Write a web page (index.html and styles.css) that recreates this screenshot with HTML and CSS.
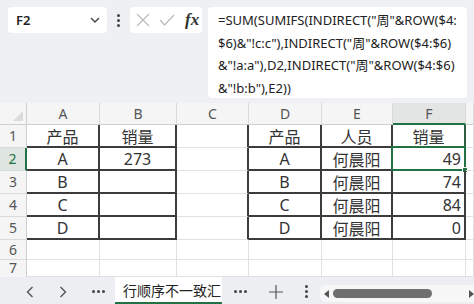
FILE: index.html
```html
<!DOCTYPE html>
<html lang="zh-CN">
<head>
  <meta charset="UTF-8" />
  <title>行顺序不一致汇总</title>
  <link rel="stylesheet" href="styles.css">
</head>
<body>
  <div class="formula-bar">
    <div class="name-box">
      <span>F2</span>
      <svg width="10" height="6" viewBox="0 0 10 6"><path d="M1 1l4 4 4-4" fill="none" stroke="#444" stroke-width="1.4"/></svg>
    </div>
    <div class="more-dots"><i></i><i></i><i></i></div>
    <div class="fx-box">
      <svg width="14" height="14" viewBox="0 0 14 14"><path d="M1 1l12 12M13 1L1 13" stroke="#b9bcc0" stroke-width="1.2"/></svg>
      <svg width="16" height="12" viewBox="0 0 16 12"><path d="M1 6l4.5 5L15 1" fill="none" stroke="#b9bcc0" stroke-width="1.2"/></svg>
      <span class="fx">fx</span>
    </div>
    <div class="formula">=SUM(SUMIFS(INDIRECT("周"&amp;ROW($4:<br>$6)&amp;"!c:c"),INDIRECT("周"&amp;ROW($4:$6)<br>&amp;"!a:a"),D2,INDIRECT("周"&amp;ROW($4:$6)<br>&amp;"!b:b"),E2))</div>
  </div>

  <div class="sheet">
    <!-- column headers -->
    <div class="cell corner"></div>
    <div class="cell hdr">A</div>
    <div class="cell hdr">B</div>
    <div class="cell hdr">C</div>
    <div class="cell hdr">D</div>
    <div class="cell hdr">E</div>
    <div class="cell hdr active-col">F</div>
    <div class="cell hdr"></div>

    <!-- row 1 -->
    <div class="cell rh">1</div>
    <div class="cell tb">产品</div>
    <div class="cell tb">销量</div>
    <div class="cell edge"></div>
    <div class="cell tb">产品</div>
    <div class="cell tb">人员</div>
    <div class="cell tb col-f">销量</div>
    <div class="cell"></div>

    <!-- row 2 -->
    <div class="cell rh active-row">2</div>
    <div class="cell tb">A</div>
    <div class="cell tb">273</div>
    <div class="cell edge"></div>
    <div class="cell tb">A</div>
    <div class="cell tb">何晨阳</div>
    <div class="cell tb num selected">49<span class="sel"><b></b></span></div>
    <div class="cell"></div>

    <!-- row 3 -->
    <div class="cell rh">3</div>
    <div class="cell tb">B</div>
    <div class="cell tb"></div>
    <div class="cell edge"></div>
    <div class="cell tb">B</div>
    <div class="cell tb">何晨阳</div>
    <div class="cell tb num">74</div>
    <div class="cell"></div>

    <!-- row 4 -->
    <div class="cell rh">4</div>
    <div class="cell tb">C</div>
    <div class="cell tb"></div>
    <div class="cell edge"></div>
    <div class="cell tb">C</div>
    <div class="cell tb">何晨阳</div>
    <div class="cell tb num">84</div>
    <div class="cell"></div>

    <!-- row 5 -->
    <div class="cell rh">5</div>
    <div class="cell tb">D</div>
    <div class="cell tb"></div>
    <div class="cell edge"></div>
    <div class="cell tb">D</div>
    <div class="cell tb">何晨阳</div>
    <div class="cell tb num">0</div>
    <div class="cell"></div>

    <!-- row 6 -->
    <div class="cell rh">6</div>
    <div class="cell"></div>
    <div class="cell"></div>
    <div class="cell"></div>
    <div class="cell"></div>
    <div class="cell"></div>
    <div class="cell"></div>
    <div class="cell"></div>

    <!-- row 7 (cut by the tab bar) -->
    <div class="cell rh last">7</div>
    <div class="cell"></div>
    <div class="cell"></div>
    <div class="cell"></div>
    <div class="cell"></div>
    <div class="cell"></div>
    <div class="cell"></div>
    <div class="cell"></div>
  </div>

  <div class="tabbar">
    <div class="tab-nav">
      <svg width="8" height="12" viewBox="0 0 8 12"><path d="M6.5 1L1.5 6l5 5" fill="none" stroke="#555" stroke-width="1.4"/></svg>
      <svg width="8" height="12" viewBox="0 0 8 12"><path d="M1.5 1l5 5-5 5" fill="none" stroke="#555" stroke-width="1.4"/></svg>
      <span class="hdots"><i></i><i></i><i></i></span>
    </div>
    <div class="tab">行顺序不一致汇</div>
    <div class="tab-tools">
      <span class="hdots"><i></i><i></i><i></i></span>
      <svg width="14" height="14" viewBox="0 0 14 14"><path d="M7 0v14M0 7h14" stroke="#555" stroke-width="1.2"/></svg>
      <span class="vdots"><i></i><i></i><i></i></span>
    </div>
    <div class="scrollbar">
      <svg width="6" height="8" viewBox="0 0 6 8"><path d="M5 0v8L0 4z" fill="#555"/></svg>
      <div class="thumb"></div>
      <svg class="arrow-right" width="6" height="8" viewBox="0 0 6 8"><path d="M1 0v8l5-4z" fill="#555"/></svg>
    </div>
  </div>
</body>
</html>
```

FILE: styles.css
```css
* {
  box-sizing: border-box;
}

body {
  margin: 0;
  width: 474px;
  height: 304px;
  overflow: hidden;
  font-family: 'Noto Sans', 'Noto Sans CJK SC', sans-serif;
  color: #333;
  background: #fff;
}

/* formula bar */
.formula-bar {
  display: flex;
  align-items: flex-start;
  height: 103px;
  padding: 7px 7px 0 8px;
  background: #eef0f3;
}

.name-box {
  width: 99px;
  height: 26px;
  background: #fff;
  border-radius: 4px;
  display: flex;
  align-items: center;
  justify-content: space-between;
  padding: 0 7px 0 8px;
  font-size: 13px;
  font-weight: 600;
  color: #222;
}

.more-dots {
  width: 23px;
  height: 26px;
  display: flex;
  flex-direction: column;
  align-items: center;
  justify-content: center;
  gap: 2px;
}

.more-dots i {
  width: 3px;
  height: 3px;
  border-radius: 50%;
  background: #444;
}

.fx-box {
  width: 72px;
  height: 26px;
  background: #fff;
  border-radius: 4px;
  display: flex;
  align-items: center;
  gap: 9px;
  padding: 0 0 0 6px;
}

.fx {
  font-family: 'Liberation Serif', serif;
  font-style: italic;
  font-size: 17px;
  font-weight: 600;
  color: #333;
  margin-left: 1px;
}

.formula {
  flex: 1;
  height: 91px;
  margin-left: 6px;
  background: #fff;
  border-radius: 4px;
  padding: 2px 6px 0 10px;
  font-size: 13px;
  line-height: 22.5px;
  color: #222;
  white-space: nowrap;
  overflow: hidden;
}

/* sheet grid */
.sheet {
  display: grid;
  grid-template-columns: 27px 73px 77px 72px 73px 71px 73px 1fr;
  grid-template-rows: 22px repeat(5, 23px) 20px 17px;
  height: 174px;
  overflow: hidden;
}

.cell {
  position: relative;
  display: flex;
  align-items: center;
  justify-content: center;
  font-size: 16px;
  border-right: 1px solid #e1e1e1;
  border-bottom: 1px solid #e1e1e1;
}

.corner {
  background: #f5f5f5;
  border-right-color: #cfcfcf;
  border-bottom-color: #cfcfcf;
}

.corner::after {
  content: '';
  position: absolute;
  right: 3px;
  bottom: 3px;
  border-left: 10px solid transparent;
  border-bottom: 10px solid #dcdcdc;
}

.hdr {
  background: #f5f5f5;
  font-size: 14px;
  color: #555;
  border-right-color: #dadada;
  border-bottom-color: #cfcfcf;
}

.hdr.active-col {
  background: #e3e5e4;
  border-bottom: 2px solid #217346;
}

.rh {
  background: #f5f5f5;
  font-size: 14px;
  line-height: 16px;
  color: #555;
  border-right-color: #cfcfcf;
  border-bottom-color: #dadada;
}

.rh.last {
  align-items: flex-start;
  padding-top: 1px;
  line-height: 14px;
  border-bottom: 0;
}

.rh.active-row {
  background: #dfe5e1;
  color: #217346;
  border-right: 2px solid #217346;
}

.tb {
  border-right: 2px solid #3c3c3c;
  border-bottom: 2px solid #3c3c3c;
}

.edge {
  border-right: 2px solid #3c3c3c;
}

.col-f {
  border-right-color: #2f5e44;
}

.num {
  justify-content: flex-end;
  padding-right: 3px;
}

.sel {
  position: absolute;
  left: -2px;
  top: -2px;
  right: -2px;
  bottom: -2px;
  border: 2px solid #217346;
}

.sel b {
  position: absolute;
  right: -4px;
  bottom: -4px;
  width: 6px;
  height: 6px;
  background: #217346;
  border: 1px solid #fff;
}

/* sheet tabs */
.tabbar {
  display: flex;
  height: 27px;
  background: #eceef1;
}

.tab-nav {
  width: 115px;
  display: flex;
  align-items: center;
  gap: 25px;
  padding-left: 26px;
  padding-top: 2px;
}

.hdots {
  display: flex;
  gap: 2px;
}

.hdots i,
.vdots i {
  width: 3px;
  height: 3px;
  border-radius: 50%;
  background: #444;
}

.vdots {
  display: flex;
  flex-direction: column;
  gap: 2px;
}

.tab {
  width: 107px;
  background: #fff;
  padding: 4px 0 0 8px;
  font-family: 'Noto Sans CJK SC', sans-serif;
  font-size: 14px;
  line-height: 19px;
  color: #222;
  white-space: nowrap;
  overflow: hidden;
  border-bottom: 2px solid #217346;
  background-clip: padding-box;
}

.tab-tools {
  width: 98px;
  display: flex;
  align-items: center;
  gap: 22px;
  padding-left: 12px;
  padding-top: 2px;
}

.scrollbar {
  flex: 1;
  display: flex;
  align-items: center;
  gap: 3px;
  margin: 8px 0 2px;
  padding-left: 4px;
  background: #f7f7f8;
  border-radius: 6px 0 0 6px;
}

.thumb {
  width: 99px;
  height: 9px;
  border-radius: 5px;
  background: #6f6f6f;
}

.arrow-right {
  margin-left: auto;
}
```
